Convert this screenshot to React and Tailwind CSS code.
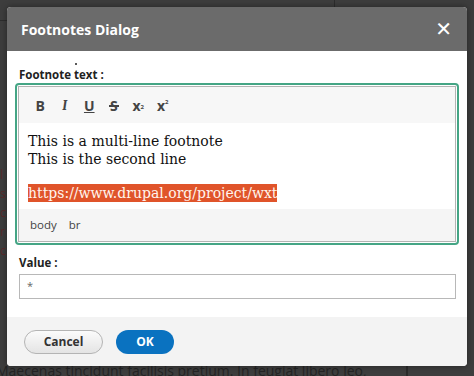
const sans = { fontFamily: '"Open Sans", "DejaVu Sans", sans-serif' };

function ToolButton({ children, className = "" }) {
  return (
    <span
      className={`flex h-[24px] w-[24.5px] items-center justify-center text-[14px] font-bold text-[#444] ${className}`}
    >
      {children}
    </span>
  );
}

export default function App() {
  return (
    <div
      className="relative h-[376px] w-[474px] overflow-hidden bg-[#3d3d3d]"
      style={sans}
    >
      {/* page behind the overlay */}
      <div className="absolute left-[334px] top-0 h-[8px] w-px bg-[#2c2c2c]" />
      <div className="absolute left-0 top-[20px] h-px w-[8px] bg-[#2c2c2c]" />
      <div className="absolute left-0 top-[170px] flex w-[7px] flex-col gap-[9px] text-[12px] leading-[10px] text-[#5a2a2a]">
        <span>l</span>
        <span>s</span>
        <span>c</span>
        <span>r</span>
        <span>c</span>
      </div>
      <div className="absolute left-[-4px] top-[362px] whitespace-nowrap text-[14px] leading-[18px] text-[#242424]">
        Maecenas tincidunt facilisis pretium. In feugiat libero leo,
      </div>
      <div className="absolute left-[406px] top-[366px] h-[10px] w-[2px] bg-[#2a2a2a]" />

      {/* dialog */}
      <div className="absolute left-[7px] top-[7px] flex h-[359px] w-[460px] flex-col overflow-hidden rounded-[4px] bg-white shadow-[0_0_6px_rgba(0,0,0,0.4)]">
        <div className="flex h-[44px] shrink-0 items-center justify-between bg-[#6b6b6b] pl-[14px] pr-[15px]">
          <span className="text-[14px] font-bold text-white">Footnotes Dialog</span>
          <span className="text-[20px] font-bold leading-none text-white">✕</span>
        </div>

        <div className="flex flex-1 flex-col px-[8px]">
          <div className="ml-[60px] mt-[12px] h-[2px] w-[2px] rounded-full bg-[#222]" />
          <div className="ml-[4px] mt-[3px] text-[11.5px] font-bold leading-[14px] text-[#222]">
            Footnote text :
          </div>

          <div className="mt-[1px] h-[162px] rounded-[4px] border-2 border-[#45a585] p-[1px]">
            <div className="flex h-full flex-col border border-[#b3b3b3]">
              <div className="flex h-[36px] items-center bg-[#f7f7f7] pl-[9px]">
                <ToolButton>B</ToolButton>
                <ToolButton className="italic font-serif">I</ToolButton>
                <ToolButton className="underline">U</ToolButton>
                <ToolButton>
                  <span className="relative">
                    S
                    <span className="absolute left-[-1px] right-[-1px] top-1/2 h-[1.5px] bg-[#444]" />
                  </span>
                </ToolButton>
                <ToolButton>
                  x<sub className="text-[6px]">2</sub>
                </ToolButton>
                <ToolButton>
                  x<sup className="text-[6px]">2</sup>
                </ToolButton>
              </div>

              <div
                className="flex-1 bg-white px-[9px] pt-[9px] text-[14px] leading-[18px] text-[#111]"
                style={{ fontFamily: '"DejaVu Serif", serif' }}
              >
                <div>This is a multi-line footnote</div>
                <div>This is the second line</div>
                <div className="mt-[16px]">
                  <span className="bg-[#e0542a] py-[1px] text-[#fff4ee]">
                    https://www.drupal.org/project/wxt
                  </span>
                </div>
              </div>

              <div className="flex h-[32px] items-center gap-[12px] bg-[#f5f5f5] pl-[11px] text-[11.5px] text-[#444]">
                <span>body</span>
                <span>br</span>
              </div>
            </div>
          </div>

          <div className="ml-[4px] mt-[11px] text-[11.5px] font-bold leading-[14px] text-[#222]">
            Value :
          </div>
          <div className="ml-[4px] mr-[3px] mt-[4px] flex h-[25px] items-center border border-[#b8b8b8] pl-[7px] text-[11px] text-[#666]">
            *
          </div>
        </div>

        <div className="flex h-[49px] shrink-0 items-center gap-[13px] bg-[#f3f3f3] pl-[17px]">
          <button className="h-[24px] w-[79px] rounded-full border border-[#b4b4b4] bg-gradient-to-b from-[#fbfbfb] to-[#e4e4e4] text-[12px] font-bold text-[#333]">
            Cancel
          </button>
          <button className="h-[24px] w-[58px] rounded-full bg-[#0a72c0] text-[12px] font-bold text-white">
            OK
          </button>
        </div>
      </div>
    </div>
  );
}
